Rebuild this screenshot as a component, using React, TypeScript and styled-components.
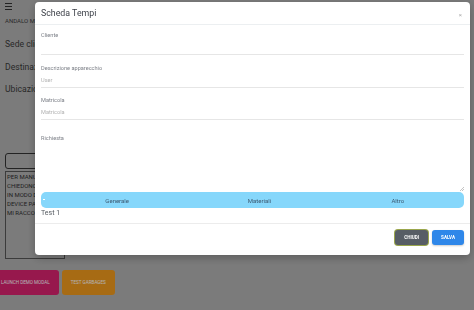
import React from "react";
import styled, { createGlobalStyle } from "styled-components";

const Global = createGlobalStyle`
  html, body { margin: 0; padding: 0; }
  body {
    width: 474px;
    height: 310px;
    overflow: hidden;
    background: #b1b1b1;
    font-family: Roboto, "Noto Sans", "Liberation Sans", sans-serif;
  }
  * { box-sizing: border-box; }
`;

/* ---------- background page ---------- */
const Page = styled.div`
  display: flex;
  flex-direction: column;
  padding: 3px 0 0 5px;
  height: 310px;
  color: #3a3a3a;
`;

const Burger = styled.div`
  display: flex;
  flex-direction: column;
  gap: 2px;
  width: 7px;
  span {
    display: block;
    height: 1px;
    background: #333;
  }
`;

const Crumb = styled.div`
  margin-top: 7px;
  height: 7px;
  line-height: 7px;
  font-size: 6px;
  text-transform: uppercase;
  color: #3d3d3d;
  white-space: nowrap;
`;

const InfoRow = styled.div<{ $mt: number }>`
  height: 10px;
  line-height: 10px;
  font-size: 8.6px;
  color: #3a3a3a;
  white-space: nowrap;
  margin-top: ${(p) => p.$mt}px;
`;

const SearchBox = styled.div`
  margin-top: 59px;
  width: 60px;
  height: 16px;
  border: 1px solid #333;
  border-radius: 3px;
`;

const NoteBox = styled.div`
  margin-top: 2px;
  width: 60px;
  height: 88px;
  border: 1px solid #555;
  padding: 0 1px;
  display: flex;
  flex-direction: column;
  font-size: 6px;
  line-height: 9px;
  text-transform: uppercase;
  color: #2e2e2e;
  white-space: nowrap;
`;

const ButtonRow = styled.div`
  display: flex;
  gap: 3px;
  margin: 11px 0 0 -13px;
`;

const PageButton = styled.div<{ $bg: string }>`
  height: 25px;
  padding: 0 9px;
  display: flex;
  align-items: center;
  border-radius: 3px;
  background: ${(p) => p.$bg};
  color: #ffffff;
  font-size: 4.6px;
  text-transform: uppercase;
  white-space: nowrap;
`;

/* ---------- modal ---------- */
const Overlay = styled.div`
  position: fixed;
  inset: 0;
  background: rgba(0, 0, 0, 0.3);
  padding: 2px 4px 0 35px;
`;

const Modal = styled.div`
  width: 435px;
  height: 253px;
  background: #ffffff;
  border-radius: 4px;
  display: flex;
  flex-direction: column;
  box-shadow: 0 3px 8px rgba(0, 0, 0, 0.25);
`;

const Header = styled.div`
  height: 23px;
  display: flex;
  align-items: center;
  justify-content: space-between;
  padding: 0 8px 0 6px;
  border-bottom: 1px solid #eceff1;
`;

const Title = styled.div`
  font-size: 8.8px;
  color: #3b3f47;
`;

const Close = styled.div`
  font-size: 6px;
  color: #aaa;
  margin-top: 3px;
`;

const Body = styled.div`
  display: flex;
  flex-direction: column;
  padding: 6px 6px 0 6px;
`;

const Field = styled.div<{ $mt?: number }>`
  display: flex;
  flex-direction: column;
  margin-top: ${(p) => p.$mt ?? 0}px;
`;

const Label = styled.div`
  height: 8px;
  line-height: 8px;
  font-size: 5.6px;
  color: #7d8088;
`;

const Input = styled.div<{ $h: number }>`
  height: ${(p) => p.$h}px;
  border-bottom: 1px solid #e6e6e6;
  font-size: 5.6px;
  color: #b3b3b3;
  display: flex;
  align-items: center;
`;

const TextArea = styled.div`
  height: 49px;
  position: relative;
`;

const Grip = styled.svg`
  position: absolute;
  right: 0;
  bottom: 0;
`;

const Tabs = styled.div`
  margin-top: 1px;
  height: 16px;
  border-radius: 5px;
  background: #86d7fb;
  display: flex;
  align-items: center;
  padding-left: 2px;
  position: relative;
`;

const Dash = styled.span`
  position: absolute;
  left: 2px;
  top: 7px;
  width: 2px;
  height: 1px;
  background: #ffffff;
`;

const Tab = styled.div<{ $shift: number }>`
  flex: 1;
  text-align: center;
  font-size: 6px;
  color: #3d5a72;
  transform: translateX(${(p) => p.$shift}px);
`;

const TabContent = styled.div`
  margin-top: 1px;
  height: 8px;
  line-height: 8px;
  font-size: 7px;
  color: #555a60;
`;

const Footer = styled.div`
  margin-top: 6px;
  border-top: 1px solid #ececec;
  display: flex;
  justify-content: flex-end;
  gap: 4px;
  padding: 6px 6px 0 0;
`;

const ModalButton = styled.div<{ $bg: string; $ring?: string }>`
  height: 15px;
  padding: 0 9px;
  display: flex;
  align-items: center;
  border-radius: 3px;
  background: ${(p) => p.$bg};
  color: #ffffff;
  font-size: 4.6px;
  font-weight: 700;
  text-transform: uppercase;
  box-shadow: ${(p) => (p.$ring ? `0 0 0 1px ${p.$ring}` : "0 1px 2px rgba(0,0,0,0.2)")};
`;

export default function App() {
  return (
    <>
      <Global />
      <Page>
        <Burger>
          <span />
          <span />
          <span />
        </Burger>
        <Crumb>Andalo Manutenzioni</Crumb>
        <InfoRow $mt={15}>Sede cliente</InfoRow>
        <InfoRow $mt={13}>Destinazione</InfoRow>
        <InfoRow $mt={12}>Ubicazione</InfoRow>
        <SearchBox />
        <NoteBox>
          <div>Per manutenzione</div>
          <div>Chiedono di</div>
          <div>In modo da</div>
          <div>Device page</div>
          <div>Mi raccomando</div>
        </NoteBox>
        <ButtonRow>
          <PageButton $bg="#d8236f">Launch demo modal</PageButton>
          <PageButton $bg="#f09a1e">Test garbages</PageButton>
        </ButtonRow>
      </Page>
      <Overlay>
        <Modal>
          <Header>
            <Title>Scheda Tempi</Title>
            <Close>×</Close>
          </Header>
          <Body>
            <Field>
              <Label>Cliente</Label>
              <Input $h={16} />
            </Field>
            <Field $mt={9}>
              <Label>Descrizione apparecchio</Label>
              <Input $h={16}>User</Input>
            </Field>
            <Field $mt={8}>
              <Label>Matricola</Label>
              <Input $h={16}>Matricola</Input>
            </Field>
            <Field $mt={14}>
              <Label>Richiesta</Label>
              <TextArea>
                <Grip width="5" height="5" viewBox="0 0 5 5">
                  <path d="M5 1 L1 5 M5 3 L3 5" stroke="#aaa" strokeWidth="0.7" />
                </Grip>
              </TextArea>
            </Field>
            <Tabs>
              <Dash />
              <Tab $shift={4}>Generale</Tab>
              <Tab $shift={6}>Materiali</Tab>
              <Tab $shift={4}>Altro</Tab>
            </Tabs>
            <TabContent>Test 1</TabContent>
          </Body>
          <Footer>
            <ModalButton $bg="#575d65" $ring="#9aa64c">Chiudi</ModalButton>
            <ModalButton $bg="#2f87e9">Salva</ModalButton>
          </Footer>
        </Modal>
      </Overlay>
    </>
  );
}
